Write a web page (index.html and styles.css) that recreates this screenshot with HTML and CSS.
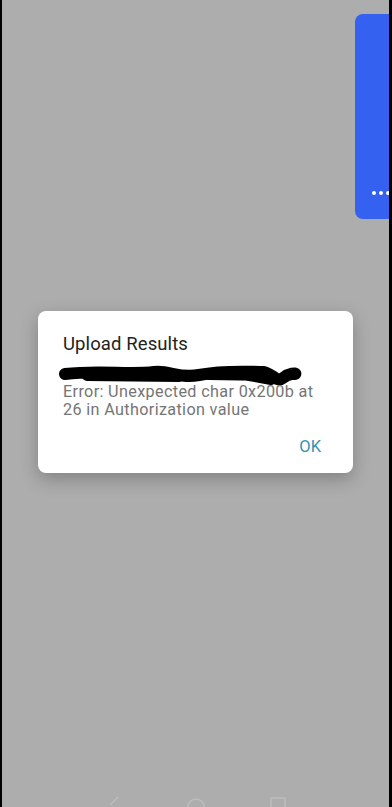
FILE: index.html
```html
<!DOCTYPE html>
<html lang="en">
<head>
    <meta charset="UTF-8">
    <meta name="viewport" content="width=device-width, initial-scale=1.0">
    <title>Upload Results</title>
    <link rel="stylesheet" href="styles.css">
</head>
<body>
    <div class="screen">
        <div class="side-tab">
            <div class="dots"><span></span><span></span><span></span></div>
        </div>

        <div class="dialog">
            <h2 class="dialog-title">Upload Results</h2>
            <svg class="redact" width="250" height="26" viewBox="0 0 250 26">
                <path d="M6 11 C40 7 70 12 95 9 C110 7 120 16 140 12 C165 7 190 9 205 9 C214 11 218 20 224 15 C230 10 238 10 236 11"
                      fill="none" stroke="#000" stroke-width="12" stroke-linecap="round" stroke-linejoin="round"/>
                <path d="M28 13 L120 14 M150 12 L210 13" stroke="#000" stroke-width="10" stroke-linecap="round"/>
                <path d="M190 14 L212 18" stroke="#000" stroke-width="8" stroke-linecap="round"/>
            </svg>
            <p class="dialog-body">Error: Unexpected char 0x200b at 26 in Authorization value</p>
            <div class="dialog-actions">
                <button class="btn-ok">OK</button>
            </div>
        </div>

        <svg class="nav-bar" width="392" height="12" viewBox="0 0 392 12">
            <path d="M118 2 L110 10" stroke="#bdbdbd" stroke-width="1.5" fill="none"/>
            <circle cx="196" cy="12" r="8" stroke="#bdbdbd" stroke-width="1.5" fill="none"/>
            <path d="M271 12 V3 H285 V12" stroke="#bdbdbd" stroke-width="1.5" fill="none"/>
        </svg>
    </div>
</body>
</html>
```

FILE: styles.css
```css
html, body {
    margin: 0;
    padding: 0;
    background: #000;
}
.screen {
    position: relative;
    width: 387px;
    height: 807px;
    margin-left: 2px;
    background: #adadad;
    overflow: hidden;
    display: flex;
    flex-direction: column;
    align-items: flex-start;
    padding-top: 311px;
    box-sizing: border-box;
}
.side-tab {
    position: absolute;
    top: 14px;
    left: 353px;
    width: 50px;
    height: 205px;
    background: #3461f0;
    border-radius: 8px;
}
.dots {
    display: flex;
    gap: 3px;
    margin: 177px 0 0 17px;
}
.dots span {
    width: 4px;
    height: 4px;
    border-radius: 50%;
    background: #fff;
}
.dialog {
    margin-left: 36px;
    width: 315px;
    height: 162px;
    box-sizing: border-box;
    background: #fff;
    border-radius: 8px;
    box-shadow: 0 6px 18px rgba(0, 0, 0, 0.25);
    padding: 22px 24px 0 25px;
    font-family: Roboto, "Noto Sans", sans-serif;
}
.dialog-title {
    margin: 0;
    font-size: 18.5px;
    font-weight: 400;
    color: #222;
    line-height: 22px;
    letter-spacing: 0.1px;
}
.redact {
    display: block;
    margin: 8px 0 0 -4px;
}
.dialog-body {
    margin: -6px 6px 0 0;
    font-size: 16.2px;
    line-height: 18px;
    letter-spacing: 0.35px;
    color: #757575;
}
.dialog-actions {
    display: flex;
    justify-content: flex-end;
    margin-top: 18px;
}
.btn-ok {
    background: none;
    border: none;
    padding: 0;
    margin-right: 8px;
    font-family: Roboto, "Noto Sans", sans-serif;
    font-size: 16.5px;
    color: #3592b0;
}
.nav-bar {
    position: absolute;
    left: -2px;
    bottom: 0;
}
```
